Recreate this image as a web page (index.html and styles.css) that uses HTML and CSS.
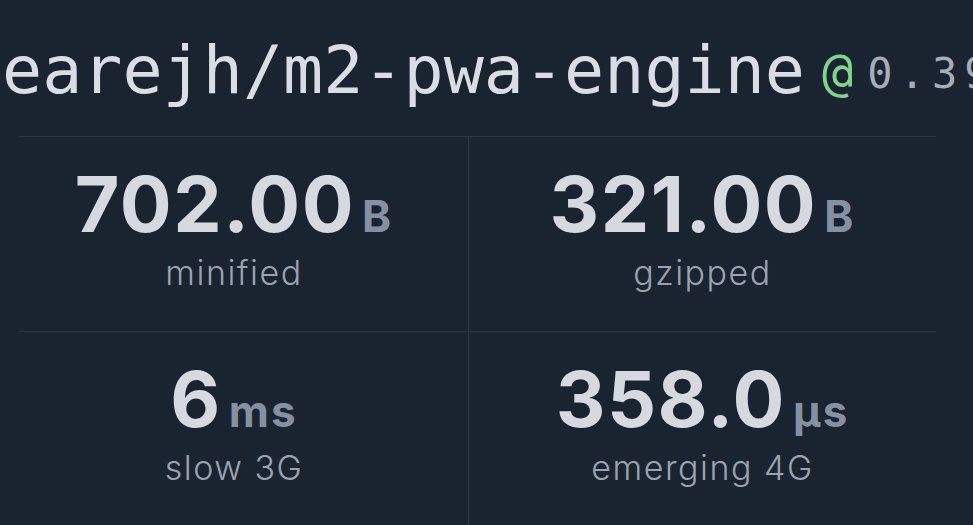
FILE: index.html
```html
<!DOCTYPE html>
<html>
<head>
<meta charset="utf-8">
<link rel="stylesheet" href="styles.css">
</head>
<body>
<header class="title">
  <span class="name">earejh/m2-pwa-engine</span><span class="at">@</span><span class="version">0.39</span>
</header>
<section class="stats">
  <div class="stat left">
    <div class="value"><span class="num">702.00</span><span class="unit">B</span></div>
    <div class="label">minified</div>
  </div>
  <div class="stat right">
    <div class="value"><span class="num">321.00</span><span class="unit">B</span></div>
    <div class="label">gzipped</div>
  </div>
  <div class="stat left">
    <div class="value"><span class="num">6</span><span class="unit">ms</span></div>
    <div class="label">slow 3G</div>
  </div>
  <div class="stat right">
    <div class="value"><span class="num">358.0</span><span class="unit">µs</span></div>
    <div class="label">emerging 4G</div>
  </div>
</section>
</body>
</html>
```
FILE: styles.css
```css
html, body {
  margin: 0;
  padding: 0;
  background: #1a2330;
  height: 100%;
  overflow: hidden;
}

.title {
  height: 136px;
  box-sizing: border-box;
  padding-top: 37px;
  padding-left: 2px;
  white-space: nowrap;
  font-family: "DejaVu Sans Mono", monospace;
  font-size: 66.7px;
  line-height: 66px;
  color: #dadee4;
}

.at {
  font-size: 52px;
  color: #7fd58e;
  margin-left: 17px;
  vertical-align: 3px;
}

.version {
  font-size: 42px;
  color: #a5adb8;
  margin-left: 14px;
  letter-spacing: 7px;
  vertical-align: 5px;
}

.stats {
  display: grid;
  grid-template-columns: 469px 467px;
  width: 936px;
}

.stat {
  border-top: 1px solid #2c3644;
  height: 195px;
  box-sizing: border-box;
  display: flex;
  flex-direction: column;
  align-items: center;
  padding-top: 29px;
}

.stat.left {
  margin-left: 19px;
  padding-right: 19px;
  border-right: 1px solid #2c3644;
}

.value {
  display: flex;
  align-items: baseline;
  font-family: "Inter", sans-serif;
  line-height: 1;
}

.num {
  font-size: 77px;
  font-weight: 700;
  color: #d6dae0;
  letter-spacing: 1.5px;
}

.unit {
  font-size: 44px;
  font-weight: 700;
  color: #8591a2;
  margin-left: 7px;
  letter-spacing: 2px;
}

.label {
  margin-top: 13px;
  font-family: "Inter", sans-serif;
  font-weight: 300;
  font-size: 34px;
  line-height: 1;
  color: #9aa3af;
  letter-spacing: 1.5px;
}
```
